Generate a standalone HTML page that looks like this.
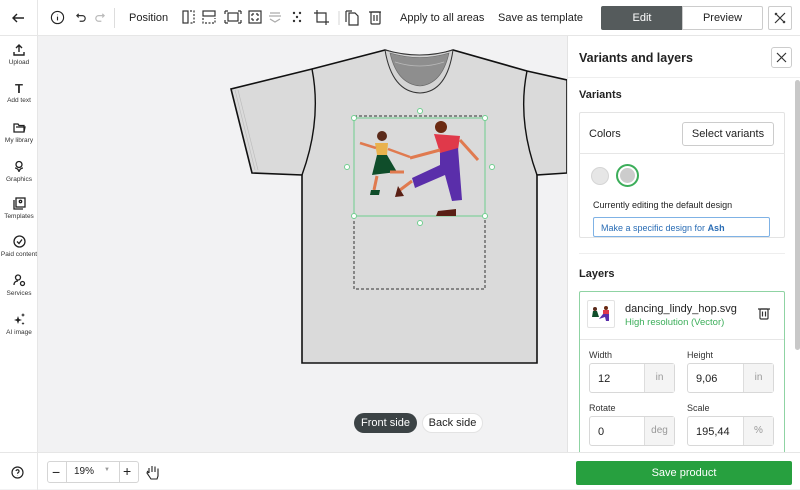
<!DOCTYPE html>
<html><head><meta charset="utf-8"><style>
*{box-sizing:border-box;margin:0;padding:0}
body{width:800px;height:489px;overflow:hidden;font-family:"Liberation Sans",sans-serif;color:#222;background:#f2f2f3;position:relative;font-size:11px}
.abs{position:absolute}
.top{left:0;top:0;width:800px;height:36px;background:#fff;border-bottom:1px solid #e6e6e6}
.side{left:0;top:36px;width:38px;height:416px;background:#fff;border-right:1px solid #e6e6e6}
.si{position:absolute;left:0;width:38px;text-align:center;font-size:6.5px;color:#333}
.si svg{display:block;margin:0 auto 3px}
.bottom{left:0;top:452px;width:800px;height:37px;background:#fff;border-top:1px solid #e6e6e6}
.panel{left:567px;top:36px;width:233px;height:416px;background:#fff;border-left:1px solid #e3e3e3}
.btn{position:absolute;border:1px solid #ccc;border-radius:3px;background:#fff;text-align:center}
.inp{position:absolute;height:30px;border:1px solid #d8d8d8;border-radius:3px;background:#fff;font-size:11px}
.inp span{position:absolute;left:8px;top:9px}
.inp i{position:absolute;right:0;top:0;width:30px;height:28px;background:#f4f4f4;border-left:1px solid #ddd;color:#999;font-style:normal;text-align:center;line-height:28px;font-size:10px}
.lbl{position:absolute;font-size:9px;color:#333}
</style></head><body>
<div class="abs top">
 <svg class="abs" style="left:10px;top:10px" width="16" height="16" viewBox="0 0 16 16" fill="none" stroke="#222" stroke-width="1.4"><path d="M14 8H3M7 4L3 8l4 4"/></svg>
 <div class="abs" style="left:37px;top:0;width:1px;height:36px;background:#e6e6e6"></div>
 <svg class="abs" style="left:50px;top:10px" width="15" height="15" viewBox="0 0 16 16" fill="none" stroke="#222" stroke-width="1.2"><circle cx="8" cy="8" r="6.5"/><path d="M8 7v4M8 5v.5"/></svg>
 <svg class="abs" style="left:75px;top:11px" width="13" height="13" viewBox="0 0 14 14" fill="none" stroke="#333" stroke-width="1.3"><path d="M4 3L2 5l2 2M2 5h6a3 3 0 010 6H5"/></svg>
 <svg class="abs" style="left:93px;top:11px" width="13" height="13" viewBox="0 0 14 14" fill="none" stroke="#bbb" stroke-width="1.3"><path d="M10 3l2 2-2 2M12 5H6a3 3 0 000 6h3"/></svg>
 <div class="abs" style="left:114px;top:8px;width:1px;height:20px;background:#ddd"></div>
 <div class="abs" style="left:129px;top:12px;font-size:11px">Position</div>
 <svg class="abs" style="left:181px;top:9px" width="200" height="17" viewBox="0 0 200 17" fill="none" stroke="#333" stroke-width="1.2">
  <rect x="2" y="2" width="5" height="12"/><path d="M9 2h4v12H9" stroke-dasharray="2 1.5"/>
  <rect x="22" y="2" width="12" height="5"/><path d="M22 9v5h12V9" stroke-dasharray="2 1.5"/>
  <rect x="47" y="4" width="10" height="8"/><path d="M44 2h3M44 2v3M60 2h-3M60 2v3M44 14h3M44 14v-3M60 14h-3M60 14v-3"/>
  <rect x="68" y="2" width="12" height="12"/><path d="M71 5h2M71 5v2M77 5h-2M77 5v2M71 11h2M71 11v-2M77 11h-2M77 11v-2"/>
  <g stroke="#aaa"><path d="M89 4h10M88 7h12M89 10l5 3 5-3"/></g>
  <g fill="#333" stroke="none"><circle cx="113" cy="4" r="1.2"/><circle cx="119" cy="4" r="1.2"/><circle cx="116" cy="8" r="1.2"/><circle cx="113" cy="12" r="1.2"/><circle cx="119" cy="12" r="1.2"/></g>
  <path d="M136 1v12h12M133 4h12v12"/>
  <path d="M158 2v14" stroke="#ddd"/>
  <path d="M168 4h6l3 3v9h-9zM165 2h6M165 2v11"/>
  <rect x="190" y="3" width="9" height="12" rx="1"/><path d="M188 3h13M193 6v6M196 6v6"/>
 </svg>
 <div class="abs" style="left:400px;top:12px;font-size:11px">Apply to all areas</div>
 <div class="abs" style="left:498px;top:12px;font-size:11px">Save as template</div>
 <div class="abs" style="left:601px;top:6px;width:82px;height:24px;background:#555b5c;border-radius:2px 0 0 2px;color:#fff;text-align:center;line-height:24px">Edit</div>
 <div class="abs" style="left:682px;top:6px;width:81px;height:24px;border:1px solid #ccc;border-radius:0 2px 2px 0;text-align:center;line-height:22px">Preview</div>
 <div class="abs" style="left:768px;top:6px;width:24px;height:24px;border:1px solid #ccc;border-radius:2px"></div>
 <svg class="abs" style="left:773px;top:11px" width="14" height="14" viewBox="0 0 14 14" fill="none" stroke="#333" stroke-width="1.2"><path d="M2 2l10 10M12 2L2 12M2 4l2-2M10 12l2-2"/></svg>
</div>
<div class="abs side">
 <div class="si" style="top:8px"><svg width="12" height="12" viewBox="0 0 12 12" fill="none" stroke="#222" stroke-width="1.4"><path d="M6 8V1M3 4l3-3 3 3M1 8v3h10V8"/></svg>Upload</div>
 <div class="si" style="top:46px"><div style="font-weight:bold;font-size:13px;line-height:13px;margin-bottom:2px">T</div>Add text</div>
 <div class="si" style="top:86px"><svg width="13" height="12" viewBox="0 0 13 12" fill="none" stroke="#222" stroke-width="1.3"><path d="M1 2h4l1 1.5h5V10H1zM3 5h9l-1 5"/></svg>My library</div>
 <div class="si" style="top:124px"><svg width="12" height="13" viewBox="0 0 12 13" fill="none" stroke="#222" stroke-width="1.3"><circle cx="6" cy="4.5" r="3"/><path d="M2 8c2 0 4 2 4 4 0-2 2-4 4-4"/></svg>Graphics</div>
 <div class="si" style="top:161px"><svg width="13" height="13" viewBox="0 0 13 13" fill="none" stroke="#222" stroke-width="1.3"><rect x="3" y="1" width="9" height="9"/><path d="M1 3v9h9"/><circle cx="7.5" cy="4.5" r="1.2"/></svg>Templates</div>
 <div class="si" style="top:199px"><svg width="13" height="13" viewBox="0 0 13 13" fill="none" stroke="#222" stroke-width="1.3"><circle cx="6.5" cy="6.5" r="5.5"/><path d="M4 6.5l2 2 3-4"/></svg>Paid content</div>
 <div class="si" style="top:238px"><svg width="13" height="13" viewBox="0 0 13 13" fill="none" stroke="#222" stroke-width="1.3"><circle cx="5" cy="3.5" r="2.5"/><path d="M1 11c0-3 2-4 4-4"/><circle cx="9.5" cy="9.5" r="2"/></svg>Services</div>
 <div class="si" style="top:277px"><svg width="13" height="13" viewBox="0 0 13 13" fill="#222"><path d="M5 3l1 3 3 1-3 1-1 3-1-3-3-1 3-1zM10 0l.6 1.4 1.4.6-1.4.6L10 4l-.6-1.4L8 2l1.4-.6zM10 9l.5 1 1 .5-1 .5-.5 1-.5-1-1-.5 1-.5z"/></svg>AI image</div>
</div>
<svg class="abs" style="left:38px;top:36px" width="529" height="416" viewBox="38 36 529 416">
 <path d="M385 50 L312 69 L231 89 L252 173 L302 175 L302 363 L537 363 L537 175 L567 173 L567 80 L527 71 L453 50 Q420 62 385 50Z" fill="#dadada" stroke="#111" stroke-width="1.6"/>
 <path d="M385 50 Q420 60 453 50 Q447 92 420 93 Q392 92 385 50Z" fill="#d4d4d4" stroke="#333" stroke-width="1"/>
 <path d="M390 53 Q420 62 449 53 Q442 84 420 86 Q397 84 390 53Z" fill="#8e8e8e" stroke="#666" stroke-width="0.6"/>
 <path d="M395 62 Q420 70 444 62" fill="none" stroke="#bbb" stroke-width="0.8"/>
 <path d="M312 69 Q322 120 302 175M527 71 Q517 120 537 175" fill="none" stroke="#111" stroke-width="1.4"/>
 <path d="M235 90 L255 170M238 90 L258 170" stroke="#bbb" stroke-width="0.6"/>
 <rect x="354" y="116" width="131" height="173" fill="none" stroke="#333" stroke-dasharray="3 2"/>
 <rect x="354" y="118" width="131" height="98" fill="none" stroke="#6fcf8f" stroke-width="1"/>
 <g fill="#fff" stroke="#6fcf8f"><circle cx="354" cy="118" r="2.5"/><circle cx="485" cy="118" r="2.5"/><circle cx="354" cy="216" r="2.5"/><circle cx="485" cy="216" r="2.5"/><circle cx="420" cy="111" r="2.5"/><circle cx="420" cy="223" r="2.5"/><circle cx="347" cy="167" r="2.5"/><circle cx="492" cy="167" r="2.5"/></g>
 <circle cx="382" cy="136" r="5" fill="#5a2a1a"/>
 <path d="M375 143 L388 143 L387 155 L377 155Z" fill="#e9b24e"/>
 <path d="M377 155 L387 155 L397 172 L372 175Z" fill="#0f4d2a"/>
 <path d="M377 176 L374 190 M390 172 L404 172" stroke="#e07a4f" stroke-width="3"/>
 <path d="M371 190 L380 190 L379 195 L370 195Z" fill="#0f4d2a"/>
 <path d="M376 148 L360 143 M388 149 L410 157" stroke="#e07a4f" stroke-width="2.5"/>
 <circle cx="441" cy="127" r="6" fill="#6b2a12"/>
 <path d="M434 134 L460 136 L458 150 L440 153Z" fill="#e0394a"/>
 <path d="M440 153 L458 148 L462 200 L452 201 L445 175 L415 188 L412 178 L440 165Z" fill="#5a2eaa"/>
 <path d="M410 158 L440 150 M460 140 L478 160" stroke="#e07a4f" stroke-width="3"/>
 <path d="M412 181 L400 190" stroke="#e07a4f" stroke-width="3"/>
 <path d="M398 186 L404 196 L395 197Z" fill="#5a2015"/>
 <path d="M438 211 L456 209 L456 216 L436 216Z" fill="#5a2015"/>
</svg>
<div class="abs" style="left:354px;top:413px;width:63px;height:20px;background:#3c4345;border-radius:10px;color:#fff;text-align:center;line-height:20px;font-size:11px">Front side</div>
<div class="abs" style="left:422px;top:413px;width:61px;height:20px;background:#fff;border:1px solid #e3e3e3;border-radius:10px;text-align:center;line-height:18px;font-size:11px">Back side</div>
<div class="abs panel">
 <div class="abs" style="left:11px;top:15px;font-size:12.5px;font-weight:bold">Variants and layers</div>
 <div class="btn" style="left:203px;top:11px;width:21px;height:21px"></div>
 <svg class="abs" style="left:208px;top:16px" width="11" height="11" viewBox="0 0 11 11" stroke="#333" stroke-width="1.2"><path d="M1 1l9 9M10 1l-9 9"/></svg>
 <div class="abs" style="left:0;top:41px;width:233px;height:1px;background:#eee"></div>
 <div class="abs" style="left:11px;top:53px;font-size:11px;font-weight:bold">Variants</div>
 <div class="abs" style="left:11px;top:76px;width:206px;height:126px;border:1px solid #e3e3e3;border-radius:2px"></div>
 <div class="abs" style="left:11px;top:117px;width:206px;height:1px;background:#e6e6e6"></div>
 <div class="abs" style="left:21px;top:92px;font-size:11px">Colors</div>
 <div class="btn" style="left:114px;top:86px;width:92px;height:24px;line-height:22px;font-size:11px">Select variants</div>
 <div class="abs" style="left:23px;top:131px;width:18px;height:18px;border-radius:50%;background:#e6e6e6;border:1px solid #d5d5d5"></div>
 <div class="abs" style="left:48px;top:128px;width:23px;height:23px;border-radius:50%;background:#ccc;border:2px solid #3cae5a;box-shadow:inset 0 0 0 2px #fff"></div>
 <div class="abs" style="left:25px;top:164px;font-size:9px">Currently editing the default design</div>
 <div class="abs" style="left:25px;top:181px;width:177px;height:20px;border:1px solid #7fb2e5;border-radius:2px;font-size:9px;color:#2a6db5;padding:5px 7px">Make a specific design for <b>Ash</b></div>
 <div class="abs" style="left:11px;top:217px;width:206px;height:1px;background:#eee"></div>
 <div class="abs" style="left:11px;top:232px;font-size:11px;font-weight:bold">Layers</div>
 <div class="abs" style="left:11px;top:255px;width:206px;height:170px;border:1px solid #8fd3a3;border-radius:2px"></div>
 <div class="abs" style="left:12px;top:303px;width:204px;height:1px;background:#e6e6e6"></div>
 <div class="abs" style="left:19px;top:264px;width:28px;height:28px;border:1px solid #e3e3e3;border-radius:2px;background:#fff"></div>
 <svg class="abs" style="left:21px;top:270px" width="24" height="16" viewBox="0 0 24 16"><circle cx="6" cy="3" r="2" fill="#5a2a1a"/><path d="M4 5h4l2 6H3z" fill="#0f4d2a"/><circle cx="17" cy="2" r="2" fill="#6b2a12"/><path d="M14 4h6v4h-6z" fill="#e0394a"/><path d="M14 8h6v7h-3l-1-4-6 2z" fill="#5a2eaa"/></svg>
 <div class="abs" style="left:57px;top:267px;font-size:11px">dancing_lindy_hop.svg</div>
 <div class="abs" style="left:57px;top:281px;font-size:9.5px;color:#3cae5a">High resolution (Vector)</div>
 <svg class="abs" style="left:190px;top:271px" width="12" height="13" viewBox="0 0 12 13" fill="none" stroke="#333" stroke-width="1.2"><rect x="2" y="2" width="8" height="10" rx="1"/><path d="M0 2h12M4.5 4.5v5M7.5 4.5v5"/></svg>
 <div class="lbl" style="left:21px;top:314px">Width</div>
 <div class="lbl" style="left:119px;top:314px">Height</div>
 <div class="inp" style="left:21px;top:327px;width:86px"><span>12</span><i>in</i></div>
 <div class="inp" style="left:119px;top:327px;width:87px"><span>9,06</span><i>in</i></div>
 <div class="lbl" style="left:21px;top:367px">Rotate</div>
 <div class="lbl" style="left:119px;top:367px">Scale</div>
 <div class="inp" style="left:21px;top:380px;width:86px"><span>0</span><i>deg</i></div>
 <div class="inp" style="left:119px;top:380px;width:87px"><span>195,44</span><i>%</i></div>
 <div class="abs" style="left:227px;top:44px;width:5px;height:270px;background:#c8c8c8;border-radius:3px"></div>
</div>
<div class="abs bottom">
 <svg class="abs" style="left:11px;top:13px" width="13" height="13" viewBox="0 0 13 13" fill="none" stroke="#222" stroke-width="1.2"><circle cx="6.5" cy="6.5" r="5.5"/><path d="M5 5a1.5 1.5 0 113 .5c0 1-1.5 1-1.5 2.2M6.5 9.5v.3"/></svg>
 <div class="abs" style="left:37px;top:0;width:1px;height:37px;background:#e6e6e6"></div>
 <div class="abs" style="left:47px;top:8px;width:92px;height:22px;border:1px solid #d5d5d5;border-radius:3px"></div>
 <div class="abs" style="left:66px;top:8px;width:1px;height:22px;background:#d5d5d5"></div>
 <div class="abs" style="left:119px;top:8px;width:1px;height:22px;background:#d5d5d5"></div>
 <div class="abs" style="left:52px;top:11px;font-size:14px">−</div>
 <div class="abs" style="left:74px;top:13px;font-size:10px">19%</div>
 <div class="abs" style="left:104px;top:14px;font-size:6px;color:#999">▼</div>
 <div class="abs" style="left:123px;top:10px;font-size:14px">+</div>
 <svg class="abs" style="left:146px;top:11px" width="14" height="16" viewBox="0 0 14 16" fill="none" stroke="#222" stroke-width="1.1"><path d="M3 9V4M6 8V2M9 8V2.5M12 9V4.5M3 9l-1.5-1.5L1 9l4 6h6l1-3V9"/></svg>
 <div class="abs" style="left:576px;top:8px;width:216px;height:24px;background:#27a03f;border-radius:2px;color:#fff;text-align:center;line-height:24px;font-size:11px">Save product</div>
</div>
</body></html>
